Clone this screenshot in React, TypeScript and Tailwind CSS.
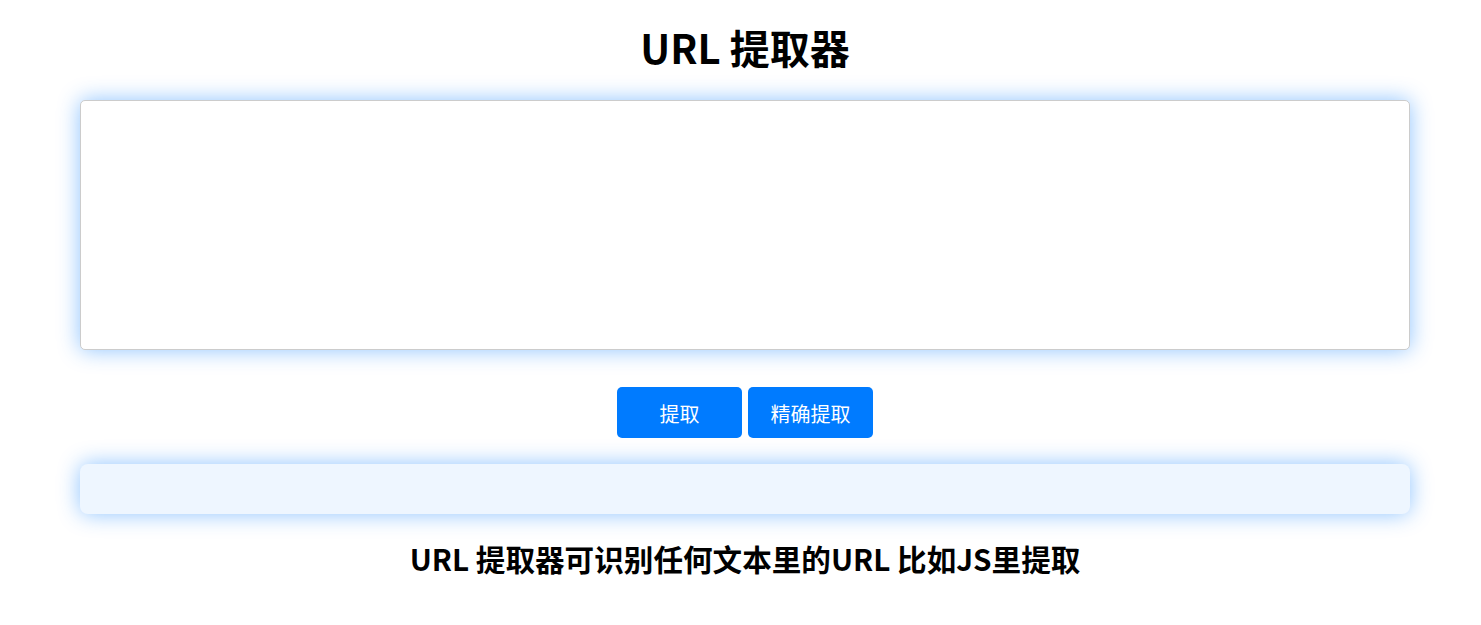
import React from 'react';

export default function App() {
  return (
    <div className="min-h-screen bg-white font-['Noto_Sans_CJK_SC',sans-serif] text-black">
      <div className="pl-20 pr-[71px] pt-[19px]">
        {/* Title */}
        <h1 className="text-center text-[40px] font-bold leading-[56px]">URL 提取器</h1>

        {/* Input */}
        <textarea
          className="mt-[25px] block h-[250px] w-full resize-none rounded-[5px] border border-[#ccc] bg-white p-2.5 text-base shadow-[0_0_22px_rgba(0,123,255,0.45)] outline-none"
        />

        {/* Actions */}
        <div className="mt-[37px] flex justify-center gap-[6px]">
          <button className="h-[51px] w-[125px] rounded-[5px] bg-[#007bff] pt-[3px] text-[20px] text-white">提取</button>
          <button className="h-[51px] w-[125px] rounded-[5px] bg-[#007bff] pt-[3px] text-[20px] text-white">精确提取</button>
        </div>

        {/* Result */}
        <div className="mt-[26px] h-[50px] w-full rounded-lg bg-[#eef6ff] shadow-[0_0_22px_rgba(0,123,255,0.45)]" />

        <h2 className="mt-[25px] text-center text-[29.6px] font-bold leading-[40px]">
          URL 提取器可识别任何文本里的URL 比如JS里提取
        </h2>
      </div>
    </div>
  );
}
